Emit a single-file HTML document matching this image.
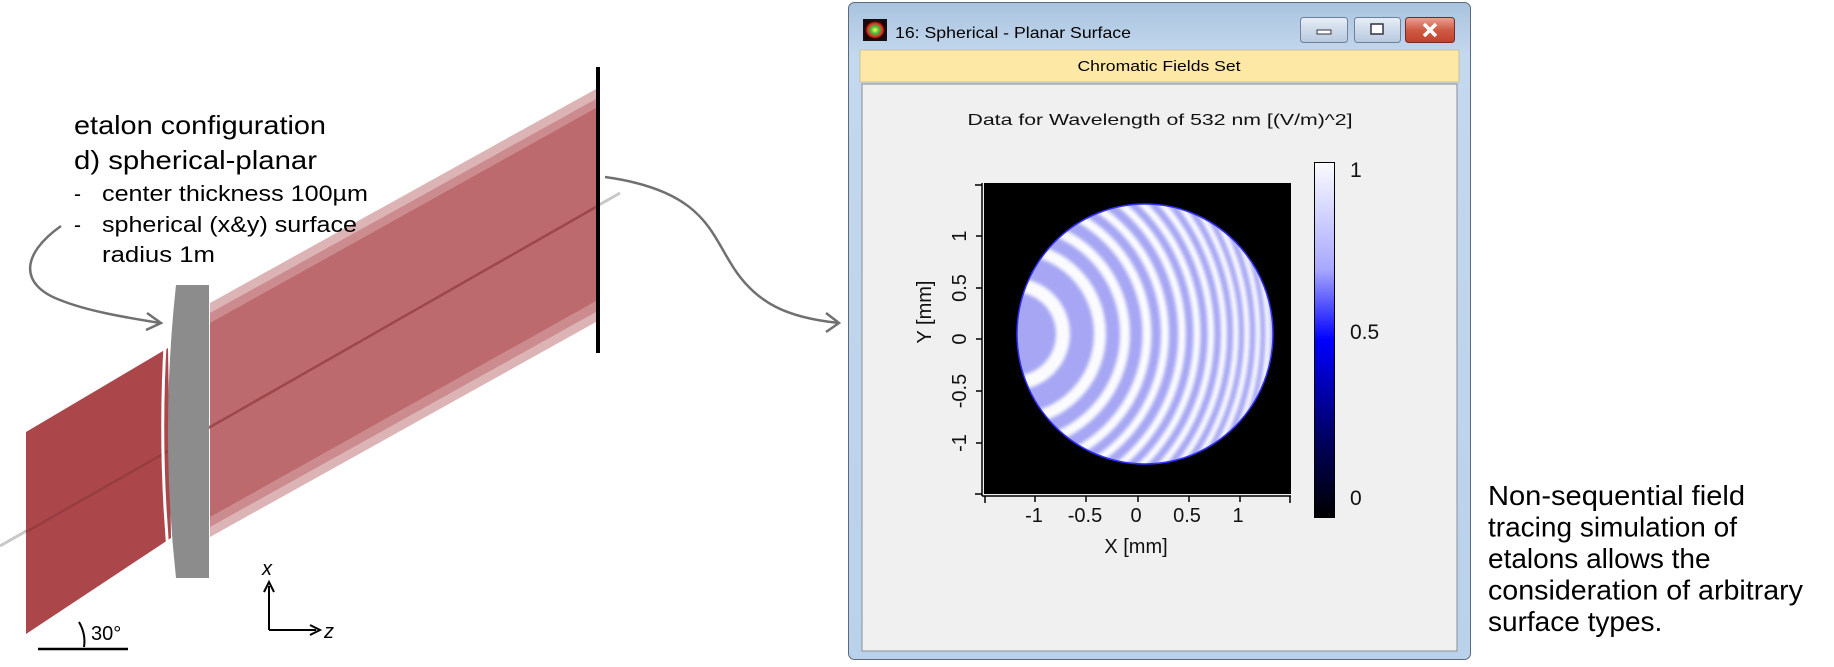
<!DOCTYPE html>
<html><head><meta charset="utf-8"><style>
html,body{margin:0;padding:0;background:#fff;width:1834px;height:667px;overflow:hidden}
svg{display:block}
text{font-family:"Liberation Sans",sans-serif}
</style></head><body>
<svg width="1834" height="667" viewBox="0 0 1834 667" xmlns="http://www.w3.org/2000/svg">
<defs>
<clipPath id="disk"><ellipse cx="1145" cy="334" rx="128" ry="130"/></clipPath>
<filter id="bl" x="-10%" y="-10%" width="120%" height="120%"><feGaussianBlur stdDeviation="1.8"/></filter>
<linearGradient id="cb" x1="0" y1="0" x2="0" y2="1">
<stop offset="0" stop-color="#fbfbff"/><stop offset="0.3" stop-color="#a8a8ff"/><stop offset="0.5" stop-color="#0000ff"/><stop offset="0.78" stop-color="#000060"/><stop offset="1" stop-color="#000"/></linearGradient>
<linearGradient id="tb" x1="0" y1="0" x2="0" y2="1"><stop offset="0" stop-color="#a9c3de"/><stop offset="0.08" stop-color="#c4d8ee"/><stop offset="1" stop-color="#b9d1ea"/></linearGradient>
<linearGradient id="btn" x1="0" y1="0" x2="0" y2="1"><stop offset="0" stop-color="#e8eef6"/><stop offset="1" stop-color="#b7c8de"/></linearGradient>
<linearGradient id="cls" x1="0" y1="0" x2="0" y2="1"><stop offset="0" stop-color="#e6a397"/><stop offset="0.5" stop-color="#cf5b45"/><stop offset="1" stop-color="#c2402c"/></linearGradient>
<radialGradient id="ico"><stop offset="0" stop-color="#ffff40"/><stop offset="0.4" stop-color="#40c040"/><stop offset="0.75" stop-color="#e03020"/><stop offset="1" stop-color="#200"/></radialGradient>
</defs>

<!-- optical axis -->
<line x1="0" y1="546" x2="620" y2="193" stroke="#c8c8c8" stroke-width="3"/>
<!-- left beam -->
<polygon points="26,432 168,348 171,538 26,634" fill="#ab474b"/>
<!-- right beam -->
<polygon points="210,303 596,89 596,322 210,537" fill="#dcb4b5"/>
<polygon points="210,313 596,99 596,312 210,527" fill="#cc8c8f"/>
<polygon points="210,323 596,108 596,301 210,517" fill="#bc6a6d"/>
<!-- axis through beam (darker) -->
<line x1="26" y1="532" x2="596" y2="207" stroke="#8f3a3e" stroke-width="2.5" opacity="0.7"/>
<!-- lens -->
<path d="M176,285 L209,285 L209,578 L176,578 Q160,432 176,285 Z" fill="#8c8c8c"/>
<path d="M169,292 Q156,432 170,572" fill="none" stroke="#fff" stroke-width="3"/>
<!-- mirror -->
<line x1="598" y1="67" x2="598" y2="353" stroke="#000" stroke-width="4"/>

<!-- labels -->
<text x="74" y="134" font-size="26" textLength="252" lengthAdjust="spacingAndGlyphs" fill="#000">etalon configuration</text>
<text x="74" y="169" font-size="26" textLength="243" lengthAdjust="spacingAndGlyphs" fill="#000">d) spherical-planar</text>
<text x="74" y="201" font-size="21" fill="#000">-</text>
<text x="102" y="201" font-size="22" textLength="266" lengthAdjust="spacingAndGlyphs" fill="#000">center thickness 100µm</text>
<text x="74" y="232" font-size="21" fill="#000">-</text>
<text x="102" y="232" font-size="22" textLength="255" lengthAdjust="spacingAndGlyphs" fill="#000">spherical (x&amp;y) surface</text>
<text x="102" y="262" font-size="22" textLength="113" lengthAdjust="spacingAndGlyphs" fill="#000">radius 1m</text>

<!-- curved arrows -->
<path d="M61,226 C20,255 20,285 60,300 C90,312 130,318 160,323" fill="none" stroke="#707070" stroke-width="2.5"/>
<path d="M147,313 L161,323 L146,330" fill="none" stroke="#707070" stroke-width="2.5"/>
<path d="M605,177 C700,190 710,230 730,262 C755,305 790,318 839,323" fill="none" stroke="#707070" stroke-width="2.5"/>
<path d="M826,313 L839,323 L826,332" fill="none" stroke="#707070" stroke-width="2.5"/>

<!-- coordinate axes -->
<text x="262" y="575" font-size="20" font-style="italic" fill="#000">x</text>
<line x1="269" y1="630" x2="269" y2="586" stroke="#000" stroke-width="2"/>
<path d="M264,592 L269,582 L274,592" fill="none" stroke="#000" stroke-width="2"/>
<line x1="269" y1="630" x2="316" y2="630" stroke="#000" stroke-width="2"/>
<path d="M310,625 L320,630 L310,635" fill="none" stroke="#000" stroke-width="2"/>
<text x="324" y="638" font-size="20" font-style="italic" fill="#000">z</text>
<!-- 30 deg -->
<line x1="38" y1="649" x2="128" y2="649" stroke="#000" stroke-width="2.5"/>
<path d="M79,622 Q86,634 84,647" fill="none" stroke="#000" stroke-width="2"/>
<text x="91" y="640" font-size="20" fill="#000">30°</text>

<!-- window -->
<rect x="848.5" y="2.5" width="622" height="657" rx="6" fill="url(#tb)" stroke="#5a6b7d" stroke-width="1"/>
<rect x="863" y="19" width="24" height="22" fill="#111"/>
<rect x="865" y="21" width="20" height="18" fill="url(#ico)"/>
<text x="895" y="38" font-size="16" textLength="236" lengthAdjust="spacingAndGlyphs" fill="#000">16: Spherical - Planar Surface</text>
<rect x="1300.5" y="17.5" width="47" height="25" rx="3" fill="url(#btn)" stroke="#6f819a"/>
<rect x="1317" y="30" width="14" height="4" fill="#fff" stroke="#334" stroke-width="1"/>
<rect x="1354.5" y="17.5" width="46" height="25" rx="3" fill="url(#btn)" stroke="#6f819a"/>
<rect x="1371" y="24" width="12" height="10" fill="#fff" stroke="#334" stroke-width="1.5"/>
<rect x="1405.5" y="17.5" width="49" height="25" rx="3" fill="url(#cls)" stroke="#7a2a20"/>
<path d="M1424,24 L1436,36 M1436,24 L1424,36" stroke="#fff" stroke-width="3.5"/>
<rect x="860" y="50" width="599" height="32" fill="#fde9a5" stroke="#c9c1a0" stroke-width="1"/>
<text x="1159" y="71" font-size="15" text-anchor="middle" textLength="163" lengthAdjust="spacingAndGlyphs" fill="#000">Chromatic Fields Set</text>
<rect x="862" y="84" width="595" height="567" fill="#f0f0f0" stroke="#8a8f96" stroke-width="1"/>

<text x="1160" y="125" font-size="16" text-anchor="middle" textLength="385" lengthAdjust="spacingAndGlyphs" fill="#111">Data for Wavelength of 532 nm  [(V/m)^2]</text>

<!-- plot -->
<rect x="984" y="183" width="307" height="311" fill="#000"/>
<g clip-path="url(#disk)">
<rect x="1010" y="200" width="270" height="270" fill="#a6a6f4"/>
<g fill="none" stroke="#fbfbff" filter="url(#bl)">
<circle cx="1014" cy="334" r="49" stroke-width="14"/>
<circle cx="1014" cy="334" r="86" stroke-width="12"/>
<circle cx="1014" cy="334" r="111" stroke-width="10"/>
<circle cx="1014" cy="334" r="133" stroke-width="9"/>
<circle cx="1014" cy="334" r="151" stroke-width="8"/>
<circle cx="1014" cy="334" r="168" stroke-width="7.5"/>
<circle cx="1014" cy="334" r="183" stroke-width="7"/>
<circle cx="1014" cy="334" r="197" stroke-width="6.5"/>
<circle cx="1014" cy="334" r="210" stroke-width="6"/>
<circle cx="1014" cy="334" r="222" stroke-width="5.5"/>
<circle cx="1014" cy="334" r="233" stroke-width="5.5"/>
<circle cx="1014" cy="334" r="244" stroke-width="5"/>
<circle cx="1014" cy="334" r="254" stroke-width="5"/>
<circle cx="1014" cy="334" r="264" stroke-width="5"/>
<circle cx="1014" cy="334" r="274" stroke-width="5"/>
</g>
</g>
<ellipse cx="1145" cy="334" rx="128" ry="130" fill="none" stroke="#3030ff" stroke-width="1.5"/>
<!-- axes ticks -->
<g stroke="#000" stroke-width="1.5">
<line x1="982" y1="183" x2="982" y2="496"/>
<line x1="982" y1="496" x2="1291" y2="496"/>
<line x1="975" y1="185" x2="982" y2="185"/><line x1="976" y1="236" x2="982" y2="236"/><line x1="976" y1="288" x2="982" y2="288"/><line x1="976" y1="339" x2="982" y2="339"/><line x1="976" y1="391" x2="982" y2="391"/><line x1="976" y1="443" x2="982" y2="443"/><line x1="975" y1="494" x2="982" y2="494"/>
<line x1="985" y1="496" x2="985" y2="503"/><line x1="1035" y1="496" x2="1035" y2="502"/><line x1="1086" y1="496" x2="1086" y2="502"/><line x1="1138" y1="496" x2="1138" y2="502"/><line x1="1189" y1="496" x2="1189" y2="502"/><line x1="1240" y1="496" x2="1240" y2="502"/><line x1="1290" y1="496" x2="1290" y2="503"/>
</g>
<g font-size="20" fill="#111" text-anchor="middle">
<text x="1034" y="522">-1</text><text x="1085" y="522">-0.5</text><text x="1136" y="522">0</text><text x="1187" y="522">0.5</text><text x="1238" y="522">1</text>
<text x="1136" y="553">X [mm]</text>
<g transform="translate(966,0)">
<text transform="translate(0,236) rotate(-90)">1</text>
<text transform="translate(0,288) rotate(-90)">0.5</text>
<text transform="translate(0,339) rotate(-90)">0</text>
<text transform="translate(0,391) rotate(-90)">-0.5</text>
<text transform="translate(0,443) rotate(-90)">-1</text>
</g>
<text transform="translate(931,312) rotate(-90)">Y [mm]</text>
</g>
<!-- colorbar -->
<rect x="1314.5" y="162.5" width="20" height="355" fill="url(#cb)" stroke="#000" stroke-width="1"/>
<g font-size="21" fill="#111">
<text x="1350" y="177">1</text><text x="1350" y="339">0.5</text><text x="1350" y="505">0</text>
</g>

<!-- right caption -->
<g font-size="28" fill="#000">
<text x="1488" y="505" textLength="257" lengthAdjust="spacingAndGlyphs">Non-sequential field</text>
<text x="1488" y="536.5">tracing simulation of</text>
<text x="1488" y="568">etalons allows the</text>
<text x="1488" y="599.5" textLength="315" lengthAdjust="spacingAndGlyphs">consideration of arbitrary</text>
<text x="1488" y="631">surface types.</text>
</g>
</svg>
</body></html>
